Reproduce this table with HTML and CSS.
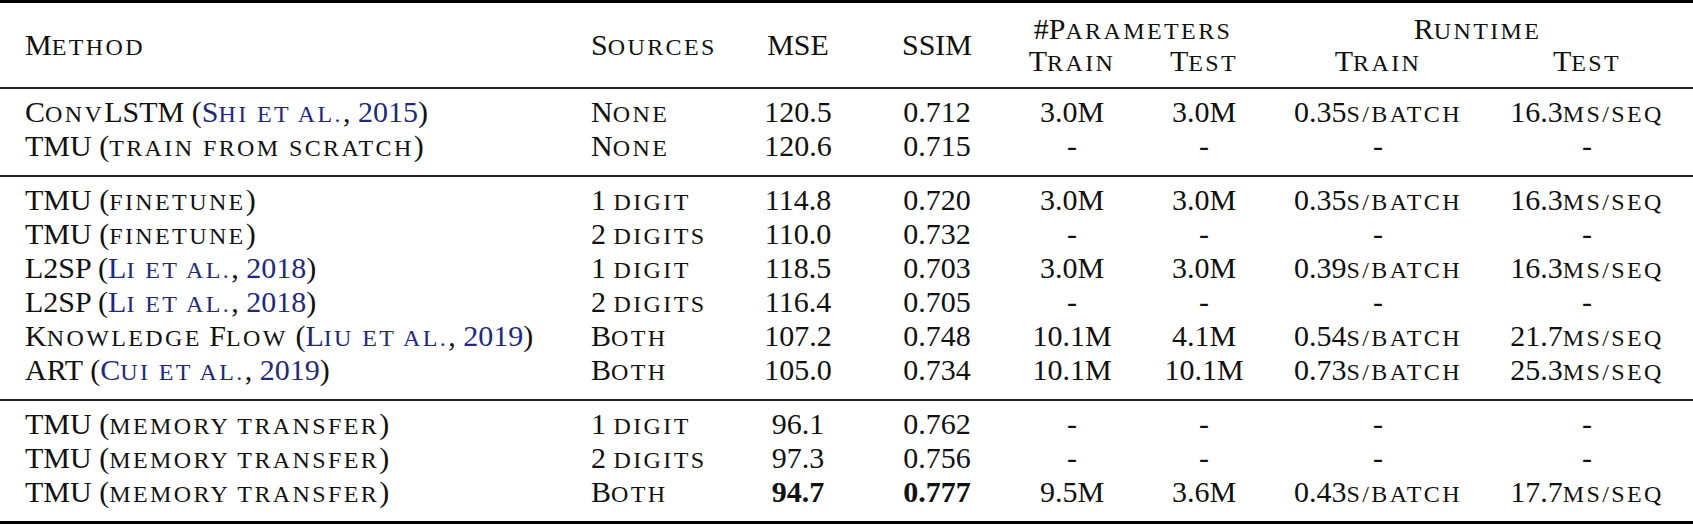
FILE: index.html
```html
<!DOCTYPE html>
<html lang="en">
  <head>
    <meta charset="UTF-8" />
    <meta name="viewport" content="width=device-width, initial-scale=1.0" />
    <title>Results</title>
    <link rel="stylesheet" href="styles.css">
  </head>
  <body>
    <table class="Results">
      <colgroup>
        <col class="ColMethod">
        <col class="ColSources">
        <col class="ColMse">
        <col class="ColSsim">
        <col class="ColPtrain">
        <col class="ColPtest">
        <col class="ColRtrain">
        <col class="ColRtest">
      </colgroup>
      <thead>
        <tr>
          <th rowspan="2" class="Method">M<span class="sc">ethod</span></th>
          <th rowspan="2" class="Left">S<span class="sc">ources</span></th>
          <th rowspan="2">MSE</th>
          <th rowspan="2">SSIM</th>
          <th colspan="2" class="GroupParams">#P<span class="sc">arameters</span></th>
          <th colspan="2" class="GroupRuntime">R<span class="sc">untime</span></th>
        </tr>
        <tr>
          <th>T<span class="sc">rain</span></th>
          <th>T<span class="sc">est</span></th>
          <th>T<span class="sc">rain</span></th>
          <th class="Rtest">T<span class="sc">est</span></th>
        </tr>
      </thead>
      <tbody>
        <tr>
          <td class="Method">C<span class="sc">onv</span>LSTM (<a class="cite">S<span class="sc">hi et al.</span></a>, <a class="cite">2015</a>)</td>
          <td class="Left">N<span class="sc">one</span></td>
          <td>120.5</td>
          <td>0.712</td>
          <td>3.0M</td>
          <td>3.0M</td>
          <td>0.35<span class="sc">s/batch</span></td>
          <td class="Rtest">16.3<span class="sc">ms/seq</span></td>
        </tr>
        <tr>
          <td class="Method">TMU (<span class="sc">train from scratch</span>)</td>
          <td class="Left">N<span class="sc">one</span></td>
          <td>120.6</td>
          <td>0.715</td>
          <td>-</td>
          <td>-</td>
          <td>-</td>
          <td class="Rtest">-</td>
        </tr>
      </tbody>
      <tbody>
        <tr>
          <td class="Method">TMU (<span class="sc">finetune</span>)</td>
          <td class="Left">1 <span class="sc">digit</span></td>
          <td>114.8</td>
          <td>0.720</td>
          <td>3.0M</td>
          <td>3.0M</td>
          <td>0.35<span class="sc">s/batch</span></td>
          <td class="Rtest">16.3<span class="sc">ms/seq</span></td>
        </tr>
        <tr>
          <td class="Method">TMU (<span class="sc">finetune</span>)</td>
          <td class="Left">2 <span class="sc">digits</span></td>
          <td>110.0</td>
          <td>0.732</td>
          <td>-</td>
          <td>-</td>
          <td>-</td>
          <td class="Rtest">-</td>
        </tr>
        <tr>
          <td class="Method">L2SP (<a class="cite">L<span class="sc">i et al.</span></a>, <a class="cite">2018</a>)</td>
          <td class="Left">1 <span class="sc">digit</span></td>
          <td>118.5</td>
          <td>0.703</td>
          <td>3.0M</td>
          <td>3.0M</td>
          <td>0.39<span class="sc">s/batch</span></td>
          <td class="Rtest">16.3<span class="sc">ms/seq</span></td>
        </tr>
        <tr>
          <td class="Method">L2SP (<a class="cite">L<span class="sc">i et al.</span></a>, <a class="cite">2018</a>)</td>
          <td class="Left">2 <span class="sc">digits</span></td>
          <td>116.4</td>
          <td>0.705</td>
          <td>-</td>
          <td>-</td>
          <td>-</td>
          <td class="Rtest">-</td>
        </tr>
        <tr>
          <td class="Method">K<span class="sc">nowledge</span> F<span class="sc">low</span> (<a class="cite">L<span class="sc">iu et al.</span></a>, <a class="cite">2019</a>)</td>
          <td class="Left">B<span class="sc">oth</span></td>
          <td>107.2</td>
          <td>0.748</td>
          <td>10.1M</td>
          <td>4.1M</td>
          <td>0.54<span class="sc">s/batch</span></td>
          <td class="Rtest">21.7<span class="sc">ms/seq</span></td>
        </tr>
        <tr>
          <td class="Method">ART (<a class="cite">C<span class="sc">ui et al.</span></a>, <a class="cite">2019</a>)</td>
          <td class="Left">B<span class="sc">oth</span></td>
          <td>105.0</td>
          <td>0.734</td>
          <td>10.1M</td>
          <td>10.1M</td>
          <td>0.73<span class="sc">s/batch</span></td>
          <td class="Rtest">25.3<span class="sc">ms/seq</span></td>
        </tr>
      </tbody>
      <tbody>
        <tr>
          <td class="Method">TMU (<span class="sc">memory transfer</span>)</td>
          <td class="Left">1 <span class="sc">digit</span></td>
          <td>96.1</td>
          <td>0.762</td>
          <td>-</td>
          <td>-</td>
          <td>-</td>
          <td class="Rtest">-</td>
        </tr>
        <tr>
          <td class="Method">TMU (<span class="sc">memory transfer</span>)</td>
          <td class="Left">2 <span class="sc">digits</span></td>
          <td>97.3</td>
          <td>0.756</td>
          <td>-</td>
          <td>-</td>
          <td>-</td>
          <td class="Rtest">-</td>
        </tr>
        <tr>
          <td class="Method">TMU (<span class="sc">memory transfer</span>)</td>
          <td class="Left">B<span class="sc">oth</span></td>
          <td><b>94.7</b></td>
          <td><b>0.777</b></td>
          <td>9.5M</td>
          <td>3.6M</td>
          <td>0.43<span class="sc">s/batch</span></td>
          <td class="Rtest">17.7<span class="sc">ms/seq</span></td>
        </tr>
      </tbody>
    </table>
  </body>
</html>
```

FILE: styles.css
```css
* {
  box-sizing: border-box;
}
body {
  margin: 0;
  background-color: white;
}
.Results {
  width: 1693px;
  table-layout: fixed;
  border-collapse: collapse;
  font-family: "Liberation Serif", "Times New Roman", serif;
  font-size: 30px;
  color: #111;
  border-top: 3px solid #000;
  border-bottom: 3px solid #000;
}
.ColMethod { width: 566px; }
.ColSources { width: 174px; }
.ColMse { width: 116px; }
.ColSsim { width: 162px; }
.ColPtrain { width: 108px; }
.ColPtest { width: 156px; }
.ColRtrain { width: 192px; }
.ColRtest { width: 219px; }

th,
td {
  padding: 0;
  text-align: center;
  white-space: nowrap;
  font-weight: normal;
  line-height: 34px;
}
thead th {
  line-height: 32px;
  vertical-align: middle;
}
thead tr:first-child th {
  padding-top: 10px;
}
thead tr:last-child th,
thead th[rowspan] {
  padding-bottom: 10px;
}
tbody {
  border-top: 2px solid #222;
}
tbody tr:first-child td {
  padding-top: 6px;
}
tbody tr:last-child td {
  padding-bottom: 12px;
}
.Method {
  text-align: left;
  padding-left: 25px;
}
.Left {
  text-align: left;
  padding-left: 25px;
}
.GroupParams {
  padding-right: 34px;
}
.GroupRuntime {
  padding-right: 20px;
}
.Rtest {
  padding-left: 7px;
}
.sc {
  text-transform: uppercase;
  font-size: 0.8em;
  letter-spacing: 0.1em;
  line-height: 1;
}
.cite {
  color: #1f2a78;
  text-decoration: none;
}
b {
  font-weight: bold;
}
```
